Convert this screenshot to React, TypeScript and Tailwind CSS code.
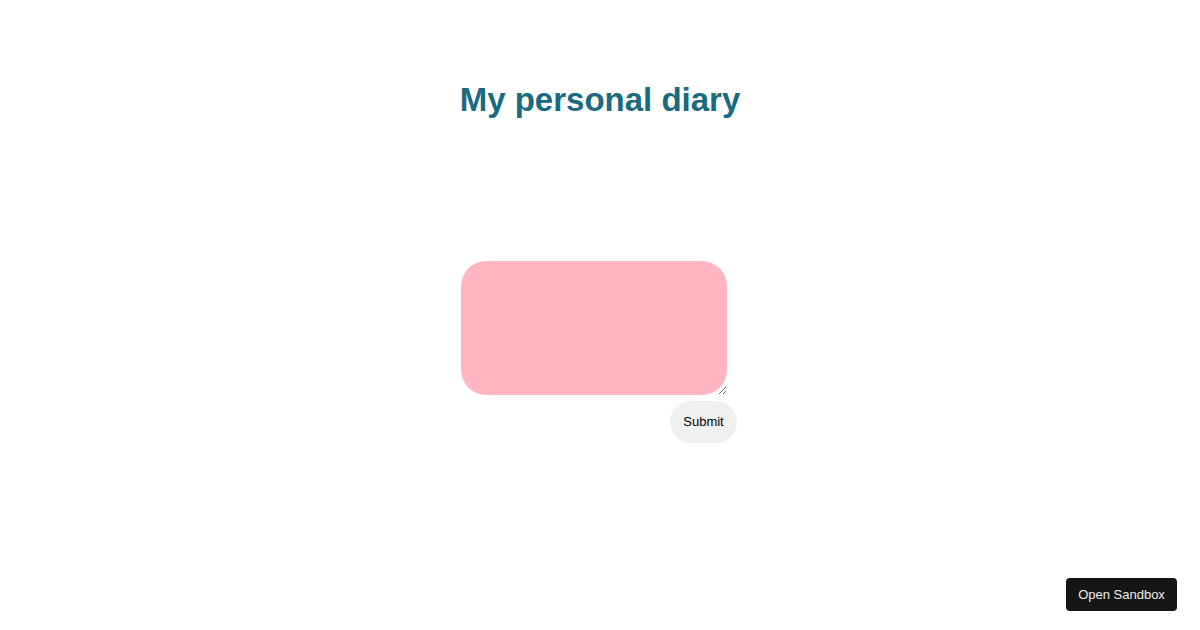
import { useState } from "react";

export default function App() {
  const [entry, setEntry] = useState("");

  return (
    <div className="relative min-h-[630px] w-full bg-white font-['Liberation_Sans',Arial,sans-serif]">
      <h1 className="pt-[80px] text-center text-[33px] font-bold leading-[40px] text-[#1a6a80]">
        My personal diary
      </h1>

      <form
        onSubmit={(e) => e.preventDefault()}
        className="mx-auto mt-[141px] flex w-[278px] flex-col items-end"
      >
        <textarea
          value={entry}
          onChange={(e) => setEntry(e.target.value)}
          className="mr-[12px] h-[134px] w-[266px] rounded-[25px] bg-[#ffb6c1] p-3 outline-none"
        />
        <button
          type="submit"
          className="mr-[2px] mt-[6px] h-[42px] w-[67px] rounded-full bg-[#eff0f0] text-[13px] text-black"
        >
          Submit
        </button>
      </form>

      <button className="absolute bottom-[19px] right-[23px] h-[33px] w-[111px] rounded-[4px] bg-[#151515] text-[13px] text-[#eeeeee]">
        Open Sandbox
      </button>
    </div>
  );
}
